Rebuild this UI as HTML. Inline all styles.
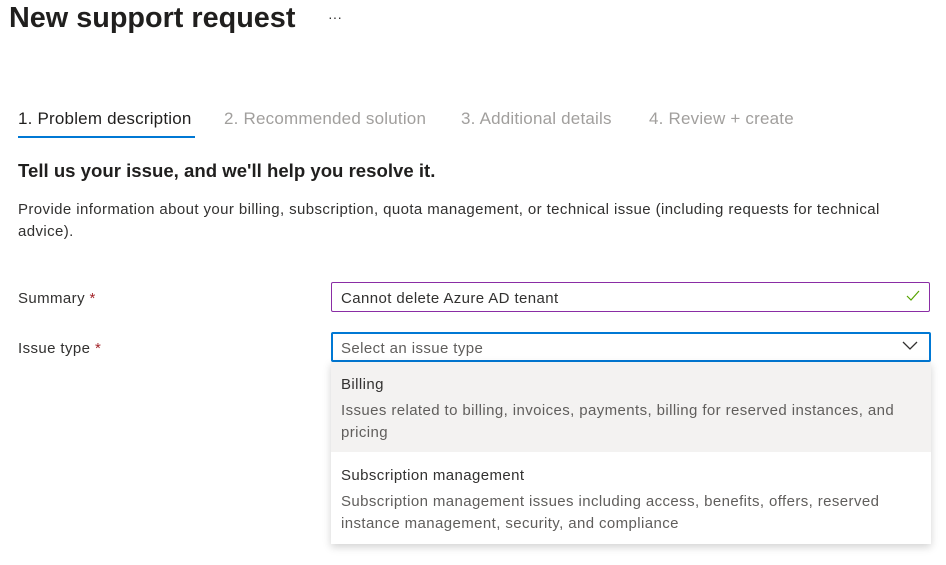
<!DOCTYPE html>
<html><head><style>
body{margin:0;width:946px;height:565px;background:#fff;font-family:"Liberation Sans",sans-serif;color:#323130;position:relative;overflow:hidden}
.a{position:absolute;white-space:nowrap}
.t{font-size:15px;letter-spacing:0.4px}
.tab{font-size:17px;letter-spacing:0.2px;top:109px}
</style></head><body>
<div class="a" style="left:9px;top:2px;font-size:28.8px;font-weight:600;color:#201f1e">New support request</div>
<div class="a" style="left:328px;top:9px;font-size:14px">···</div>
<div class="a tab" style="left:18px;color:#201f1e">1. Problem description</div>
<div class="a" style="left:18px;top:136px;width:177px;height:2px;background:#0078d4"></div>
<div class="a tab" style="left:224px;color:#a19f9d">2. Recommended solution</div>
<div class="a tab" style="left:461px;color:#a19f9d">3. Additional details</div>
<div class="a tab" style="left:649px;color:#a19f9d">4. Review + create</div>
<div class="a" style="left:18px;top:160px;font-size:18.6px;font-weight:600;color:#201f1e">Tell us your issue, and we'll help you resolve it.</div>
<div class="a t" style="left:18px;top:199px;line-height:22px;white-space:normal;width:915px">Provide information about your billing, subscription, quota management, or technical issue (including requests for technical advice).</div>
<div class="a t" style="left:18px;top:290px">Summary <span style="color:#a4262c">*</span></div>
<div class="a t" style="left:18px;top:340px">Issue type <span style="color:#a4262c">*</span></div>
<div class="a" style="left:331px;top:282px;width:597px;height:28px;border:1px solid #8a2da5;border-radius:2px"></div>
<div class="a t" style="left:341px;top:290px">Cannot delete Azure AD tenant</div>
<svg class="a" style="left:906px;top:290px" width="14" height="12"><path d="M1 6 L5 10 L13 1" fill="none" stroke="#57a300" stroke-width="1.2"/></svg>
<div class="a" style="left:331px;top:332px;width:596px;height:26px;border:2px solid #0078d4;border-radius:2px"></div>
<div class="a t" style="left:341px;top:340px;color:#605e5c">Select an issue type</div>
<svg class="a" style="left:902px;top:341px" width="16" height="10"><path d="M1 1 L8 8 L15 1" fill="none" stroke="#323130" stroke-width="1.3"/></svg>
<div class="a" style="left:331px;top:362px;width:600px;height:182px;background:#fff;box-shadow:0 3px 8px rgba(0,0,0,.18)">
<div style="height:90px;background:#f3f2f1"></div>
</div>
<div class="a t" style="left:341px;top:376px">Billing</div>
<div class="a t" style="left:341px;top:400px;line-height:22px;color:#605e5c;white-space:normal;width:585px">Issues related to billing, invoices, payments, billing for reserved instances, and pricing</div>
<div class="a t" style="left:341px;top:467px">Subscription management</div>
<div class="a t" style="left:341px;top:491px;line-height:22px;color:#605e5c;white-space:normal;width:585px">Subscription management issues including access, benefits, offers, reserved instance management, security, and compliance</div>
</body></html>
